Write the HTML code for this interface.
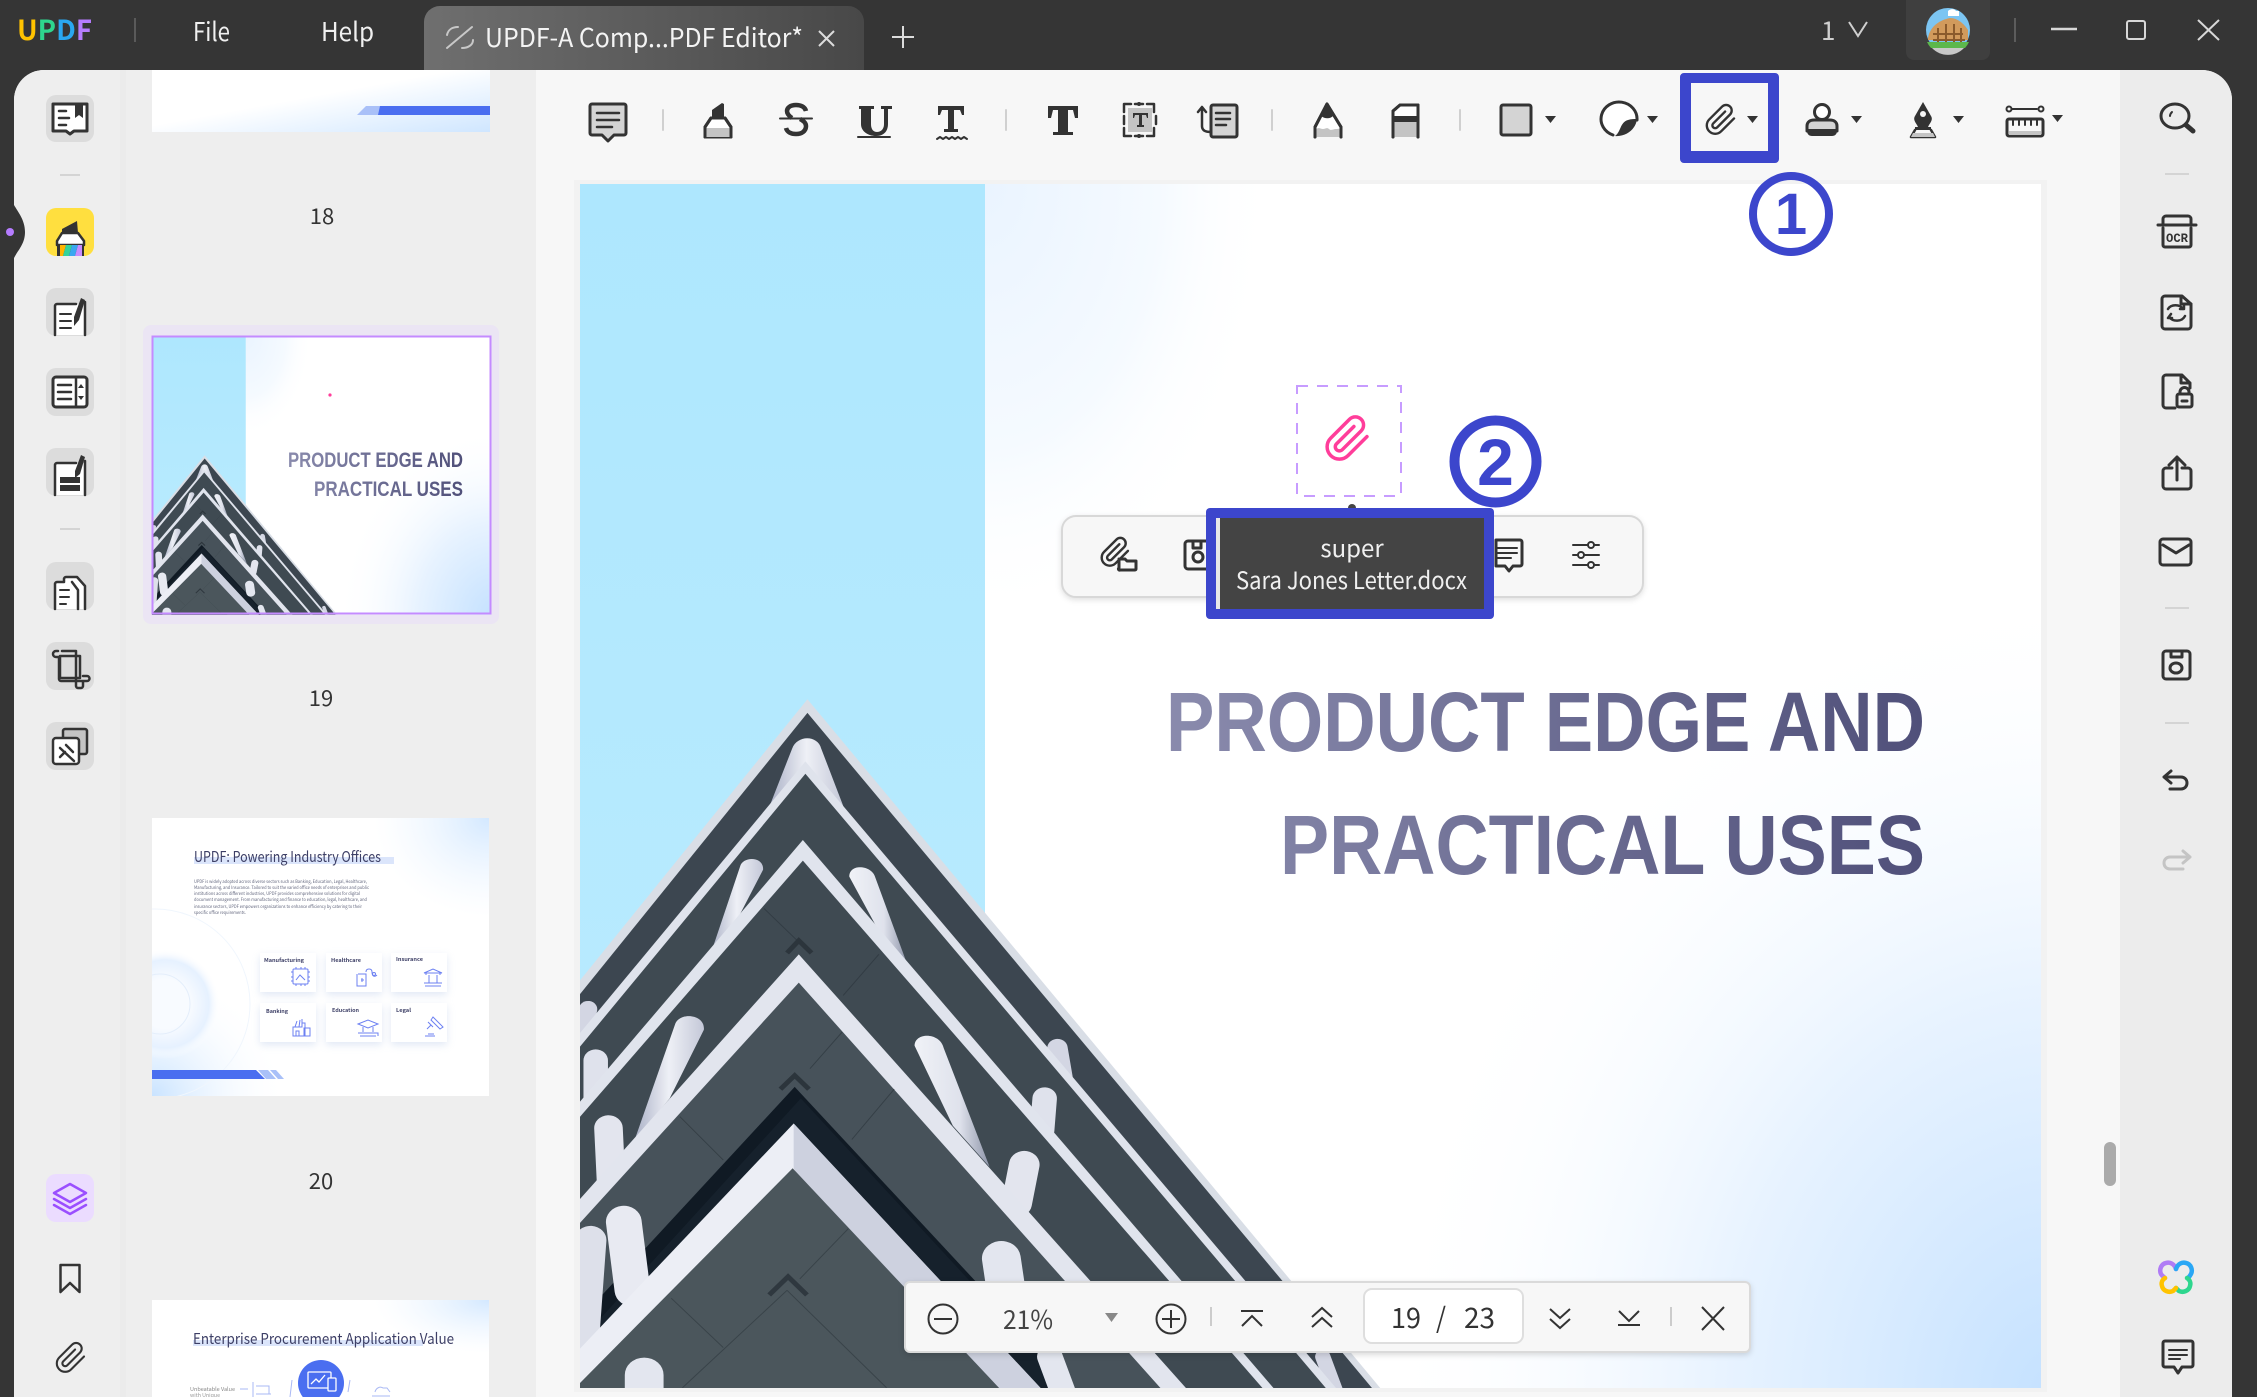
<!DOCTYPE html>
<html><head><meta charset="utf-8"><title>UPDF</title>
<style>
html,body{margin:0;padding:0;background:#353535;width:2257px;height:1397px;overflow:hidden}
svg{display:block}
text{font-family:"Noto Sans CJK SC","Liberation Sans",sans-serif}
.i{fill:none;stroke:#333;stroke-width:3;stroke-linejoin:round;stroke-linecap:round}
.w{fill:#fff}.g{fill:#d8d8d8}.k{fill:#333;stroke:none}.gg{fill:#c4c4c4;stroke:none}
.t{fill:#dcdcdc}
.s{fill:#d4d4d4}
.d{font-family:"Liberation Sans",sans-serif;font-weight:700}
</style></head><body>
<svg width="2257" height="1397" viewBox="0 0 2257 1397" xmlns="http://www.w3.org/2000/svg">
<defs>
<linearGradient id="tab" x1="0" x2="1" y1="0" y2="0"><stop offset="0" stop-color="#6f6f6f"/><stop offset="1" stop-color="#484848"/></linearGradient>
<linearGradient id="band" x1="0" x2="0" y1="0" y2="1"><stop offset="0" stop-color="#aee7fe"/><stop offset="1" stop-color="#bcecff"/></linearGradient>
<linearGradient id="col" x1="0" x2="1" y1="0" y2="0"><stop offset="0" stop-color="#aab0c6"/><stop offset=".5" stop-color="#eef0f6"/><stop offset="1" stop-color="#c4c8d8"/></linearGradient>
<linearGradient id="col2" x1="0" x2="1" y1="0" y2="0"><stop offset="0" stop-color="#f0f2f7"/><stop offset=".6" stop-color="#dfe2ec"/><stop offset="1" stop-color="#8f96aa"/></linearGradient>
<linearGradient id="tx1" gradientUnits="userSpaceOnUse" x1="1166" x2="1925" y1="0" y2="0"><stop offset="0" stop-color="#8a8bad"/><stop offset="1" stop-color="#50507a"/></linearGradient>
<linearGradient id="tx2" gradientUnits="userSpaceOnUse" x1="288" x2="463" y1="0" y2="0"><stop offset="0" stop-color="#8a8bad"/><stop offset="1" stop-color="#50507a"/></linearGradient>
<radialGradient id="pgBR" gradientUnits="userSpaceOnUse" cx="2060" cy="1400" r="1" gradientTransform="translate(2060 1400) scale(680 820) translate(-2060 -1400)"><stop offset="0" stop-color="#c4e1ff"/><stop offset=".5" stop-color="#e8f3ff"/><stop offset="1" stop-color="#fff" stop-opacity="0"/></radialGradient>
<radialGradient id="pgTL" gradientUnits="userSpaceOnUse" cx="985" cy="184" r="1" gradientTransform="translate(985 184) scale(290 440) translate(-985 -184)"><stop offset="0" stop-color="#eaf4ff"/><stop offset=".6" stop-color="#f5faff"/><stop offset="1" stop-color="#fff" stop-opacity="0"/></radialGradient>
<clipPath id="app"><path d="M14 1397V100a30 30 0 0 1 30-30H2202a30 30 0 0 1 30 30V1397Z"/></clipPath>
<clipPath id="pg"><rect x="580" y="184" width="1461" height="1204"/></clipPath>
<clipPath id="t20"><rect x="152" y="818" width="337" height="278"/></clipPath>
<clipPath id="t21"><rect x="152" y="1300" width="337" height="97"/></clipPath>
<radialGradient id="t20a" cx="1" cy="0" r="1"><stop offset="0" stop-color="#d3e8ff"/><stop offset=".55" stop-color="#fff" stop-opacity=".4"/><stop offset="1" stop-color="#fff" stop-opacity="0"/></radialGradient>
<radialGradient id="t20b" cx="0" cy="1" r=".75"><stop offset="0" stop-color="#c9e3ff"/><stop offset="1" stop-color="#fff" stop-opacity="0"/></radialGradient>
<radialGradient id="t20c" cx=".5" cy=".5" r=".5"><stop offset="0" stop-color="#f8fbff"/><stop offset=".45" stop-color="#f8fbff"/><stop offset=".8" stop-color="#e6f1ff"/><stop offset="1" stop-color="#fff" stop-opacity="0"/></radialGradient>
<linearGradient id="t18" x1="0" x2="1" y1="0" y2="1"><stop offset=".45" stop-color="#fff"/><stop offset="1" stop-color="#cfe6ff"/></linearGradient>
<g id="slide">
 <rect x="580" y="184" width="1461" height="1204" fill="#fff"/>
 <rect x="985" y="184" width="1056" height="1204" fill="url(#pgTL)"/>
 <rect x="1300" y="580" width="741" height="808" fill="url(#pgBR)"/>
 <rect x="580" y="184" width="405" height="1204" fill="url(#band)"/>
 <g clip-path="url(#pg)"><g transform="translate(560 680) scale(.5102 .4572)">
  <polygon points="485,42 37,660 37,1600 1646,1600" fill="#d9dee6"/>
  <polygon points="485,72 37,690 37,1600 1630,1600" fill="#3c4650"/>
  <g stroke-linecap="round" fill="none" stroke="#d3d6e3"><path d="M55 720L42 800" stroke-width="36"/><path d="M975 805L985 870" stroke-width="40"/><path d="M1495 1480L1525 1570" stroke-width="30"/></g>
  <path d="M455 150C465 120 505 120 512 150L556 278H410Z" fill="url(#col)"/>
  <polygon points="481,178 37,775 37,1600 1560,1600" fill="#dfe3ec"/>
  <polygon points="481,205 37,805 37,1600 1540,1600" fill="#3f4a52"/>
  <path d="M353 408C358 385 400 385 398 415L340 540L295 600Z" fill="url(#col)"/>
  <path d="M567 430C567 400 612 405 618 432L680 620L630 560Z" fill="url(#col2)"/>
  <g stroke-linecap="round" fill="none"><path d="M70 832V915" stroke="#dfe2ec" stroke-width="48"/><path d="M950 915L945 985" stroke="#dfe2ec" stroke-width="48"/></g>
  <polygon points="476,350 37,925 37,1600 1438,1600" fill="#e0e4ed"/>
  <polygon points="476,395 37,958 37,1600 1417,1600" fill="#3f4a52"/>
  <path d="M225 755C232 725 285 730 282 765L215 915L145 1010Z" fill="url(#col)"/>
  <path d="M695 800C695 770 745 770 752 805L842 1065L770 975Z" fill="url(#col2)"/>
  <g stroke-linecap="round" fill="none"><path d="M95 980L100 1095" stroke="#e3e5ee" stroke-width="56"/><path d="M910 1060L895 1145" stroke="#e3e5ee" stroke-width="60"/></g>
  <path d="M400 500L465 570M625 600L555 690" stroke="#323c44" stroke-width="2" fill="none"/>
  <path d="M445 597L468 570L493 597" stroke="#2c353c" stroke-width="10" fill="none"/>
  <polygon points="468,600 37,1138 37,1600 1268,1600" fill="#e2e5ee"/>
  <polygon points="468,662 37,1190 37,1600 1218,1600" fill="#47525a"/>
  <path d="M553 770L490 850M655 895L572 1005M235 955L320 1050" stroke="#353f46" stroke-width="2" fill="none"/>
  <path d="M432 895L460 865L488 895" stroke="#2c353c" stroke-width="10" fill="none"/>
  <polygon points="460,890 37,1400 37,1600 1052,1600" fill="#101a24"/>
  <polygon points="472,915 60,1420 60,1600 1040,1600" fill="#1a2632" opacity=".6"/>
  <g stroke-linecap="round" fill="none"><path d="M60 1225L45 1455" stroke="#dde0ea" stroke-width="62"/><path d="M125 1185L142 1335" stroke="#e8eaf2" stroke-width="70"/><path d="M865 1265L875 1340" stroke="#e3e6ef" stroke-width="76"/><path d="M960 1480L1000 1600" stroke="#e3e6ef" stroke-width="50"/></g>
  <polygon points="458,970 37,1465 37,1600 985,1600 " fill="#eceef5"/>
  <polygon points="458,970 985,1600 700,1600 458,1068" fill="#cdd1df"/>
  <polygon points="456,1068 37,1540 37,1600 904,1600" fill="#4b565c"/>
  <path d="M565 1200L470 1310M218 1352L320 1460M445 1335L640 1548M445 1335L240 1548" stroke="#394349" stroke-width="2" fill="none"/>
  <path d="M410 1345L447 1305L484 1345" stroke="#2f383f" stroke-width="10" fill="none"/>
  <path d="M165 1520V1600" stroke="#e3e6ef" stroke-width="76" stroke-linecap="round"/>
 </g></g>
</g>
<path id="clip" d="M21.44 11.05l-9.19 9.19a6 6 0 0 1-8.49-8.49l9.19-9.19a4 4 0 0 1 5.66 5.66l-9.2 9.19a2 2 0 0 1-2.83-2.83l8.49-8.48"/>
</defs>

<rect width="2257" height="1397" fill="#353535"/>

<!-- title bar -->
<rect x="424" y="6" width="440" height="80" rx="16" fill="url(#tab)"/>
<text x="17" y="40" font-size="28" font-weight="700" textLength="75" lengthAdjust="spacingAndGlyphs"><tspan fill="#ffc300">U</tspan><tspan fill="#2ed68e">P</tspan><tspan fill="#2aa7f0">D</tspan><tspan fill="#b67cff">F</tspan></text>
<path d="M135 18V42" stroke="#666" stroke-width="1.5"/>
<text x="193" y="41" font-size="26" fill="#f0f0f0" textLength="37" lengthAdjust="spacingAndGlyphs">File</text>
<text x="321" y="41" font-size="26" fill="#f0f0f0" textLength="53" lengthAdjust="spacingAndGlyphs">Help</text>
<g fill="none" stroke="#c8c8c8" stroke-width="2" stroke-linecap="round"><path d="M447 48L472 27"/><path d="M458 27c-6 0-10 3-11 8M462 48c6 0 11-3 11-8"/></g>
<text x="485" y="47" font-size="26" fill="#f4f4f4" textLength="318" lengthAdjust="spacingAndGlyphs">UPDF-A Comp...PDF Editor*</text>
<path d="M819 31L834 46M834 31L819 46M903 26V48M892 37H914" stroke="#dcdcdc" stroke-width="2" fill="none"/>
<text x="1821" y="40" font-size="26" fill="#cfcfcf">1</text>
<path d="M1849 22l9 14 9-14" fill="none" stroke="#cfcfcf" stroke-width="2"/>
<rect x="1906" y="-8" width="84" height="68" rx="8" fill="#3f3f3f"/>
<circle cx="1948" cy="30" r="22" fill="#7cc5f2"/>
<path d="M1928 38c2-12 12-18 22-20 8 0 14 6 18 12v10h-40z" fill="#d19a5c"/>
<path d="M1933 34h30M1933 40h32M1938 28v14M1946 24v18M1954 24v18M1961 28v14" stroke="#8a5a2c" stroke-width="2" fill="none"/>
<path d="M1927 42h42a22 22 0 0 1-4 6h-34a22 22 0 0 1-4-6z" fill="#5cb84c"/>
<path d="M1932 48h32a22 22 0 0 1-32 0z" fill="#c9c9c9"/>
<path d="M1948 11c3-3 7-2 8 0h3v5h-11z" fill="#fff"/>
<path d="M2015 18V42" stroke="#6a6a6a" stroke-width="1.5"/>
<path d="M2051 29H2077" stroke="#d8d8d8" stroke-width="2.5"/>
<rect x="2127" y="21" width="18" height="18" rx="2" fill="none" stroke="#d8d8d8" stroke-width="2"/>
<path d="M2198 20L2219 40M2219 20L2198 40" stroke="#d8d8d8" stroke-width="2"/>

<!-- app -->
<g clip-path="url(#app)">
 <rect x="14" y="70" width="2218" height="1327" fill="#f7f7f7"/>
 <rect x="14" y="70" width="522" height="1327" fill="#eeeeee"/>
 <rect x="120" y="70" width="6" height="1327" fill="#ebebeb"/>
 <rect x="2120" y="70" width="112" height="1327" fill="#ececec"/>
</g>
<!-- notch -->
<path d="M14 205C18 212 25 220 25 232C25 244 18 250 14 258Z" fill="#353535"/>
<circle cx="10" cy="232" r="4" fill="#b57cff"/>

<!-- thumbnails -->
<rect x="152" y="70" width="338" height="62" fill="url(#t18)"/>
<path d="M366 106H490V115H357Z" fill="#a9c0f8"/><path d="M380 106H490V115H378Z" fill="#4a6ef0"/>
<text x="322" y="224" font-size="22" fill="#333" text-anchor="middle">18</text>

<rect x="143" y="325" width="356" height="299" rx="8" fill="#ebe5f4"/>
<use href="#slide" transform="translate(152 336) scale(.2315 .2315) translate(-580 -184)"/>
<rect x="152.500" y="336.500" width="338" height="277" fill="none" stroke="#c48bff" stroke-width="2"/>
<circle cx="330" cy="395" r="1.6" fill="#ff3d9a"/>
<text class="d" x="288" y="467" font-size="21" fill="url(#tx2)" textLength="175" lengthAdjust="spacingAndGlyphs">PRODUCT EDGE AND</text>
<text class="d" x="314" y="496" font-size="21" fill="url(#tx2)" textLength="149" lengthAdjust="spacingAndGlyphs">PRACTICAL USES</text>
<text x="321" y="706" font-size="22" fill="#333" text-anchor="middle">19</text>

<!-- thumb 20 -->
<g clip-path="url(#t20)">
 <rect x="152" y="818" width="337" height="278" fill="#fff"/>
 <rect x="280" y="818" width="209" height="180" fill="url(#t20a)"/>
 <rect x="152" y="930" width="180" height="166" fill="url(#t20b)"/>
 <circle cx="165" cy="1004" r="55" fill="url(#t20c)"/>
 <g fill="none" stroke="#e4eefb"><circle cx="160" cy="1004" r="30"/><circle cx="155" cy="1004" r="95" stroke="#f0f6fd"/></g>
 <rect x="194" y="857" width="200" height="7" fill="#dbe5fb"/>
 <text x="194" y="862" font-size="15" fill="#3d3f66" textLength="187" lengthAdjust="spacingAndGlyphs">UPDF: Powering Industry Offices</text>
 <g font-size="4.600" fill="#666a80">
  <text x="194" y="883" textLength="173" lengthAdjust="spacingAndGlyphs">UPDF is widely adopted across diverse sectors such as Banking, Education, Legal, Healthcare,</text>
  <text x="194" y="889" textLength="175" lengthAdjust="spacingAndGlyphs">Manufacturing, and Insurance. Tailored to suit the varied office needs of enterprises and public</text>
  <text x="194" y="895" textLength="166" lengthAdjust="spacingAndGlyphs">institutions across different industries, UPDF provides comprehensive solutions for digital</text>
  <text x="194" y="901" textLength="173" lengthAdjust="spacingAndGlyphs">document management. From manufacturing and finance to education, legal, healthcare, and</text>
  <text x="194" y="908" textLength="168" lengthAdjust="spacingAndGlyphs">insurance sectors, UPDF empowers organizations to enhance efficiency by catering to their</text>
  <text x="194" y="914" textLength="52" lengthAdjust="spacingAndGlyphs">specific office requirements.</text>
 </g>
 <g fill="#fff" style="filter:drop-shadow(0 3px 4px rgba(120,150,210,.22))">
  <rect x="260" y="953" width="56" height="39"/><rect x="326" y="953" width="56" height="39"/><rect x="391" y="953" width="56" height="39"/>
  <rect x="260" y="1003" width="56" height="39"/><rect x="326" y="1003" width="56" height="39"/><rect x="391" y="1003" width="56" height="39"/>
 </g>
 <g font-size="5.200" font-weight="700" fill="#3d3f66">
  <text x="264" y="962" textLength="40" lengthAdjust="spacingAndGlyphs">Manufacturing</text><text x="331" y="962" textLength="30" lengthAdjust="spacingAndGlyphs">Healthcare</text><text x="396" y="961" textLength="27" lengthAdjust="spacingAndGlyphs">Insurance</text>
  <text x="266" y="1013" textLength="22" lengthAdjust="spacingAndGlyphs">Banking</text><text x="332" y="1012" textLength="27" lengthAdjust="spacingAndGlyphs">Education</text><text x="396" y="1012" textLength="15" lengthAdjust="spacingAndGlyphs">Legal</text>
 </g>
 <g fill="none" stroke="#6c80f2" stroke-width="1">
  <rect x="293" y="969" width="15" height="15" rx="1"/><path d="M291 972h2M291 977h2M291 981h2M308 972h2M308 977h2M308 981h2M296 967v2M301 967v2M305 967v2M296 984v2M301 984v2M305 984v2M296 980l4-5 5 5"/>
  <path d="M358 974h8v12h-9v-12M361 980h3M362 978v4M366 972c0-3 2-3 3-3s3 0 3 3c0 5 3 5 5 3"/><circle cx="374" cy="974" r="1.500"/>
  <path d="M424 973l9-4 9 4zM426 973v2M440 973v2M425 986h16M424 983h18M429 975v8M437 975v8"/>
  <path d="M293 1036v-9h9v-4h3v13zM304 1036v-8h6v8zM296 1036v-5h3v5zM295 1027l2-6M299 1027l1-7M302 1023v-4"/>
  <path d="M360 1036h16M358 1033h20v3M363 1027v5M373 1027v5M358 1024l10-4 10 4-10 4z"/>
  <path d="M425 1036h10M428 1034h6M433 1017l10 10-3 2-9-9zM433 1027l-5-5M427 1029l4-4"/>
 </g>
 <path d="M152 1070H256L265 1079H152Z" fill="#4a6ef0"/>
 <path d="M258 1070H268L276 1079H266ZM270 1070H276L284 1079H278Z" fill="#a9c0f8"/>
</g>
<text x="321" y="1189" font-size="22" fill="#333" text-anchor="middle">20</text>

<!-- thumb 21 -->
<g clip-path="url(#t21)">
 <rect x="152" y="1300" width="337" height="97" fill="#fff"/>
 <rect x="280" y="1300" width="209" height="97" fill="url(#t20a)"/>
 <rect x="193" y="1340" width="230" height="6" fill="#dbe5fb"/>
 <text x="193" y="1344" font-size="15" fill="#3d3f66" textLength="261" lengthAdjust="spacingAndGlyphs">Enterprise Procurement Application Value</text>
 <circle cx="321" cy="1383" r="23" fill="#4a6ef0"/>
 <g fill="none" stroke="#fff" stroke-width="1.300"><rect x="308" y="1372" width="23" height="16" rx="1"/><path d="M311 1384l5-5 3 3 6-7"/><rect x="328" y="1378" width="8" height="13" rx="1" fill="#4a6ef0"/></g>
 <text x="190" y="1391" font-size="5.500" fill="#888" textLength="45" lengthAdjust="spacingAndGlyphs">Unbeatable Value</text>
 <text x="190" y="1397" font-size="5.500" fill="#999" textLength="30" lengthAdjust="spacingAndGlyphs">with Unique</text>
 <g fill="none" stroke="#a9b8f4" stroke-width="1"><path d="M240 1389h8M253 1382v15M256 1386h13v8M256 1394h15"/><path d="M375 1392c1-4 5-6 8-4h4l3 4M372 1396h18M292 1380l-2 17M350 1380l-2 12"/></g>
</g>

<!-- main page -->
<rect x="574" y="180" width="1473" height="1212" fill="#000" opacity=".02"/>
<use href="#slide"/>
<text class="d" x="1166" y="751" font-size="84" fill="url(#tx1)" textLength="759" lengthAdjust="spacingAndGlyphs">PRODUCT EDGE AND</text>
<text class="d" x="1280" y="874" font-size="84" fill="url(#tx1)" textLength="645" lengthAdjust="spacingAndGlyphs">PRACTICAL USES</text>

<!-- top toolbar -->
<g class="i">
 <path class="s" d="M590 106a2 2 0 0 1 2-2h32a2 2 0 0 1 2 2v27a2 2 0 0 1-2 2h-10l-6 6-6-6h-10a2 2 0 0 1-2-2z"/>
 <path d="M597 113h22M597 120h22M597 127h15" stroke-width="2.500"/>
 <path d="M663 110V130" stroke="#d0d0d0" stroke-width="2"/>
 <!-- highlighter -->
 <path class="k" d="M712 118V110L722 103L724 104V118Z"/>
 <path class="w" d="M711 118H725L731 127V137H705V127Z"/>
 <rect class="gg" x="706" y="128" width="24" height="9"/>
 <path d="M705 137V127L711 118H725L731 127V137"/>
 <!-- strike -->
 <path d="M806 111c-1-4-5-6-10-6-6 0-9 3-9 6 0 3 2 5 5 7M800 119c4 2 6 4 6 7 0 5-4 8-10 8-5 0-9-2-10-6" stroke-width="4.500" stroke-linecap="butt"/>
 <path d="M780 118.500H812" stroke-width="2"/>
 <!-- underline -->
 <path class="k" d="M859 106h15v3h-3v15c0 6 3 8 6 8s7-2 7-8v-15h-3v-3h11v3h-4v15c0 8-5 12-12 12s-15-4-15-12v-15h-2z"/>
 <path d="M858 137H890" stroke-width="2"/>
 <!-- squiggly T -->
 <path class="k" d="M938 106H964V115H962L960 110H954V129H958V132H944V129H948V110H942L940 115H938Z"/>
 <path d="M937 139l3-2 3 2 3-2 3 2 3-2 3 2 3-2 3 2 3-2 3 2" stroke-width="2"/>
 <path d="M1006 110V130" stroke="#d0d0d0" stroke-width="2"/>
 <!-- T -->
 <path class="k" d="M1048 106H1078V118H1075L1073 110H1068V132H1073V135H1053V132H1058V110H1053L1051 118H1048Z"/>
 <!-- text box -->
 <rect class="gg" x="1128" y="108" width="24" height="24"/>
 <path class="k" d="M1133 113H1148V118H1147L1146 115H1142V125H1144V127H1137V125H1139V115H1135L1134 118H1133Z"/>
 <path d="M1131 104h-7v8M1147 104h7v8M1131 136h-7v-8M1147 136h7v-8M1124 116v8M1156 116v8M1135 104h8M1135 136h8" stroke-width="2.500"/>
 <circle cx="1139" cy="104" r="2" fill="#333" stroke="none"/><circle cx="1139" cy="136" r="2" fill="#333" stroke="none"/>
 <!-- callout -->
 <rect class="s" x="1211" y="105" width="26" height="32" rx="2"/>
 <path d="M1216 113h14M1216 119h14M1216 125h10" stroke-width="2.500"/>
 <path d="M1198 112l4-5 4 5M1202 108v18c0 5 4 6 9 6" stroke-width="2.500"/>
 <path d="M1272 110V130" stroke="#d0d0d0" stroke-width="2"/>
 <!-- pencil -->
 <path class="w" d="M1315 137V127L1327 104L1341 127V137"/>
 <path class="gg" d="M1316 129c3-2 5 0 7 0s4-2 6 0 4 0 7 0 4-1 4 1v7h-24Z"/>
 <path class="k" d="M1327 103L1333 116C1330 119 1325 119 1321 116Z"/>
 <path d="M1315 137V127L1327 104L1341 127V137" />
 <!-- eraser -->
 <path class="w" d="M1393 137V111L1400 105H1418V137"/>
 <rect class="gg" x="1394" y="122" width="24" height="15"/>
 <rect class="k" x="1393" y="116" width="26" height="6"/>
 <path d="M1393 137V111L1400 105H1418V137"/>
 <path d="M1460 110V130" stroke="#d0d0d0" stroke-width="2"/>
 <!-- rect -->
 <rect class="s" x="1501" y="105" width="30" height="30" rx="2"/>
 <!-- sticker -->
 <path class="w" d="M1637 120A18 17 0 1 0 1613 135"/>
 <path class="k" d="M1637 119C1636 129 1626 137 1615 136C1621 132 1620 122 1628 120C1631 119 1634 119 1637 119Z"/>
 <!-- clip -->
 <g transform="translate(1704 103) scale(1.400)" stroke-width="1.700"><use href="#clip"/></g>
 <!-- stamp -->
 <circle cx="1822" cy="112" r="7.500" class="w"/>
 <path class="s" d="M1807 131v-5c0-4 3-6 7-6h16c4 0 7 2 7 6v5z"/>
 <path class="k" d="M1807 129H1837V131C1837 134 1835 136 1832 136H1812C1809 136 1807 134 1807 131Z"/>
 <path class="k" d="M1819 118h6v3h-6z"/>
 <!-- pen -->
 <path class="k" d="M1923 102L1931 116C1933 119 1931 122 1929 125L1928 127H1918L1917 125C1915 122 1913 119 1915 116Z"/>
 <circle cx="1923" cy="114" r="3" fill="#f7f7f7" stroke="none"/>
 <path class="k" d="M1915 127h16v3h-16z"/>
 <path d="M1915 130L1911 137H1935L1931 130" stroke-width="2.500"/>
 <path class="gg" d="M1913 133h20l2 4h-24z"/>
 <!-- ruler -->
 <path d="M2011 109H2037" stroke-width="2"/><circle cx="2009" cy="109" r="2.500" fill="#f7f7f7" stroke-width="2"/><circle cx="2041" cy="109" r="2.500" fill="#f7f7f7" stroke-width="2"/>
 <rect x="2007" y="119" width="36" height="17" rx="2"/>
 <rect class="gg" x="2009" y="131" width="32" height="4"/>
 <path d="M2013 119v6M2019 119v6M2025 119v6M2031 119v6M2037 119v6" stroke-width="2"/>
</g>
<g fill="#333">
 <path d="M1545 116h11l-5.500 7z"/><path d="M1647 116h11l-5.500 7z"/><path d="M1747 116h11l-5.500 7z"/>
 <path d="M1851 116h11l-5.500 7z"/><path d="M1953 116h11l-5.500 7z"/><path d="M2052 115h11l-5.500 7z"/>
</g>

<!-- blue annotation 1 -->
<path fill-rule="evenodd" d="M1684 73H1775a4 4 0 0 1 4 4V159a4 4 0 0 1-4 4H1684a4 4 0 0 1-4-4V77a4 4 0 0 1 4-4ZM1691 83V151H1768V83Z" fill="#3c46cc"/>
<circle cx="1791" cy="214" r="38" fill="none" stroke="#3c46cc" stroke-width="8"/>
<text x="1791" y="234" font-size="58" font-weight="700" fill="#3c46cc" text-anchor="middle" style="font-family:'Liberation Sans',sans-serif">1</text>

<!-- attachment annotation -->
<rect x="1297" y="386" width="104" height="110" fill="none" stroke="#c79cff" stroke-width="2" stroke-dasharray="11 9"/>
<g transform="translate(1323 414) scale(2.050)" fill="none" stroke="#ff3d9a" stroke-width="1.700" stroke-linecap="round" stroke-linejoin="round"><use href="#clip"/></g>
<circle cx="1352" cy="508" r="4" fill="#444"/>

<!-- popup -->
<rect x="1062" y="516" width="581" height="81" rx="14" fill="#f7f7f7" stroke="#d8d8d8" stroke-width="2" style="filter:drop-shadow(0 2px 3px rgba(0,0,0,.12))"/>
<g class="i" stroke-width="2.500">
 <g transform="translate(1099 536) scale(1.350)" stroke-width="1.800"><use href="#clip"/></g>
 <path fill="#f7f7f7" d="M1119 568v-9h6l2 2h9v8a1 1 0 0 1-1 1h-15a1 1 0 0 1-1-2z"/>
 <rect x="1185" y="541" width="24" height="28" rx="3"/>
 <path d="M1193 541v7h8v-7"/><circle cx="1198" cy="557" r="5"/>
 <path d="M1496 540h24a2 2 0 0 1 2 2v22a2 2 0 0 1-2 2h-7l-4 5-4-5h-9z"/>
 <path d="M1497 548h20M1497 553h20M1497 558h14" stroke-width="2"/>
 <path d="M1573 545h26M1573 555h26M1573 565h26" stroke-width="2"/>
 <circle cx="1591" cy="545" r="3" fill="#f7f7f7" stroke-width="2"/><circle cx="1581" cy="555" r="3" fill="#f7f7f7" stroke-width="2"/><circle cx="1591" cy="565" r="3" fill="#f7f7f7" stroke-width="2"/>
</g>

<!-- tooltip -->
<rect x="1206" y="508" width="288" height="111" rx="4" fill="#3c46cc"/>
<rect x="1216" y="518" width="268" height="91" fill="#e8e8e8"/>
<rect x="1220" y="518" width="264" height="91" fill="#444"/>
<text x="1352" y="557" font-size="24" fill="#f0f0f0" text-anchor="middle">super</text>
<text x="1236" y="589" font-size="24" fill="#f0f0f0" textLength="231" lengthAdjust="spacingAndGlyphs">Sara Jones Letter.docx</text>

<!-- circle 2 -->
<circle cx="1495.500" cy="461.500" r="41" fill="none" stroke="#3c46cc" stroke-width="10"/>
<text x="1495.500" y="485" font-size="66" font-weight="700" fill="#3c46cc" text-anchor="middle" style="font-family:'Liberation Sans',sans-serif">2</text>

<!-- bottom bar -->
<rect x="905" y="1282" width="845" height="70" rx="5" fill="#f7f7f7" stroke="#dadada" stroke-width="2" style="filter:drop-shadow(0 2px 3px rgba(0,0,0,.14))"/>
<rect x="1364" y="1289" width="159" height="54" rx="8" fill="#fff" stroke="#dedede" stroke-width="2"/>
<g fill="none" stroke="#333" stroke-width="2">
 <circle cx="943" cy="1319" r="14.500"/><path d="M934 1319h18"/>
 <circle cx="1171" cy="1319" r="14.500"/><path d="M1162 1319h18M1171 1310v18"/>
 <path d="M1211 1307v19" stroke="#ccc"/><path d="M1671 1307v19" stroke="#ccc"/>
 <path d="M1241 1311h22M1242 1326l10-10 10 10"/>
 <path d="M1312 1317l10-9 10 9M1312 1327l10-9 10 9"/>
 <path d="M1550 1309l10 9 10-9M1550 1319l10 9 10-9"/>
 <path d="M1619 1311l10 10 10-10M1618 1325h22"/>
 <path d="M1702 1307l22 23M1724 1307l-22 23"/>
</g>
<path d="M1105 1313h13l-6.500 9z" fill="#888"/>
<text x="1028" y="1329" font-size="26" fill="#444" text-anchor="middle" textLength="50" lengthAdjust="spacingAndGlyphs">21%</text>
<g font-size="28" fill="#333">
 <text x="1391" y="1328" textLength="30" lengthAdjust="spacingAndGlyphs">19</text>
 <text x="1436" y="1328" textLength="10" lengthAdjust="spacingAndGlyphs">/</text>
 <text x="1464" y="1328" textLength="31" lengthAdjust="spacingAndGlyphs">23</text>
</g>

<!-- left rail -->
<g class="t">
 <rect x="46" y="95" width="48" height="47" rx="10"/>
 <rect x="46" y="288" width="48" height="48" rx="10"/><rect x="46" y="368" width="48" height="48" rx="10"/>
 <rect x="46" y="448" width="48" height="48" rx="10"/><rect x="46" y="562" width="48" height="48" rx="10"/>
 <rect x="46" y="642" width="48" height="48" rx="10"/><rect x="46" y="722" width="48" height="48" rx="10"/>
</g>
<rect x="46" y="208" width="48" height="48" rx="10" fill="#ffdf3f"/>
<rect x="46" y="1174" width="48" height="48" rx="10" fill="#ebdcff"/>
<path d="M60 175H80M60 529H80" stroke="#d4d4d4" stroke-width="2"/>
<path d="M2165 174H2189M2165 608H2189M2165 723H2189" stroke="#d4d4d4" stroke-width="2"/>
<g class="i">
 <!-- reader -->
 <path class="w" d="M53 104H87V131H74L70 134L66 131H53Z"/>
 <path d="M59 111h7M59 118h10M59 125h7" stroke-width="2.500"/>
 <path class="k" d="M75 103V118L79 115L83 118V103Z"/>
 <!-- highlight tile -->
 <path class="k" d="M77 221L62 229V233H78Z"/>
 <path class="w" d="M62 233H78L84 241V245H57V241Z" stroke-width="2.500"/>
 <rect x="57" y="245" width="27" height="11" fill="#333" stroke="none"/>
 <path d="M60 245h6l-3 11h-3z" fill="#ffb400" stroke="none"/><path d="M66 245h6l-3 11h-6z" fill="#34d399" stroke="none"/><path d="M72 245h6l-3 11h-6z" fill="#3aa7f0" stroke="none"/><path d="M78 245h4v11h-7z" fill="#c78cff" stroke="none"/>
 <!-- edit -->
 <path class="w" d="M55 335V306a2 2 0 0 1 2-2H85V335Z" stroke="none"/>
 <path d="M55 335V306a2 2 0 0 1 2-2H76M85 302V335" stroke-width="2.500"/>
 <path d="M60 314h11M60 321h11M60 328h11" stroke-width="2"/>
 <path class="k" d="M81 298L85 300L79 320L74 326L74 317Z"/>
 <!-- reader 2 -->
 <rect x="53" y="377" width="34" height="30" rx="3" class="w"/>
 <path d="M76 377v30M58 385h13M58 392h13M58 399h13" stroke-width="2.500"/>
 <path class="k" d="M78 388l3-4 3 4zM78 396l3 4 3-4z"/>
 <!-- redact -->
 <path class="w" d="M55 495V465a2 2 0 0 1 2-2H85V495Z" stroke="none"/>
 <path d="M55 495V465a2 2 0 0 1 2-2H76M85 461V495" stroke-width="2.500"/>
 <rect class="k" x="60" y="477" width="20" height="6"/><rect class="k" x="60" y="485" width="20" height="6"/>
 <path class="k" d="M81 455L85 457L80 474L75 478L75 471Z"/>
 <!-- organize -->
 <path class="w" d="M55 609V584a2 2 0 0 1 2-2H64V579a2 2 0 0 1 2-2H77L85 586V609Z" stroke="none"/>
 <path d="M55 609V584a2 2 0 0 1 2-2H64M64 582V579a2 2 0 0 1 2-2H77L85 586V609M72 582L78 590V609" stroke-width="2.500"/>
 <path d="M60 590h9M60 597h9M60 604h6" stroke-width="2"/>
 <!-- crop -->
 <rect x="60" y="656" width="20" height="22" stroke-width="2.500" fill="#dcdcdc"/>
 <path d="M62 651H76V686a2 2 0 0 0 2 2h3a2 2 0 0 0 2-2V682" stroke-width="2.500"/>
 <path d="M58 651h-2a3 3 0 0 0 0 6h3v22a2 2 0 0 0 2 2H87a2.500 2.500 0 0 0 0-5h-4" stroke-width="2.500"/>
 <!-- overlap -->
 <rect x="63" y="729" width="24" height="25" rx="2" fill="#c4c4c4" stroke-width="2.500"/>
 <rect x="53" y="738" width="26" height="26" rx="3" class="w" stroke-width="2.500"/>
 <path d="M60 757l5-5M60 748l14 13M66 745l7 7" stroke-width="2.500"/>
 <!-- bookmark -->
 <path d="M60.500 1265H79.500V1292L70 1283L60.500 1292Z" stroke-width="2.500"/>
 <!-- bottom clip -->
 <g transform="translate(54 1341) scale(1.400)" stroke-width="1.500"><use href="#clip"/></g>
</g>
<g fill="none" stroke="#9a4fff" stroke-width="2.500" stroke-linejoin="round" stroke-linecap="round">
 <path d="M70 1184L86 1193L70 1202L54 1193Z"/><path d="M54 1199L70 1208L86 1199"/><path d="M54 1205L70 1214L86 1205"/>
</g>

<!-- right rail -->
<g class="i" stroke-width="2.500">
 <ellipse cx="2175" cy="116" rx="14" ry="12"/><path d="M2186 125L2193 131" stroke-width="5"/><path d="M2170 116c0-2 1-3 2-4" stroke-width="2"/>
 <path d="M2163 224v-5a3 3 0 0 1 3-3h22a3 3 0 0 1 3 3v5M2158 225H2196M2163 228v17a2 2 0 0 0 2 2h24a2 2 0 0 0 2-2v-17"/>
 <path d="M2165 296h17l9 8v22a3 3 0 0 1-3 3h-23a3 3 0 0 1-3-3v-27a3 3 0 0 1 3-3z"/><path d="M2181 296v8h10"/>
 <path d="M2168 309c3-5 12-5 15 0M2185 316c-3 6-12 6-16 1M2180 309h4v-4M2171 314l-3 4h4" stroke-width="2.500"/>
 <path d="M2175 408h-9a3 3 0 0 1-3-3v-27a3 3 0 0 1 3-3h16l8 8v5M2181 375v8h9"/>
 <rect x="2177" y="394" width="15" height="13" rx="2"/><path d="M2180 394v-2a4.500 4.500 0 0 1 9 0v2M2182 401h5" />
 <path d="M2172 468h-6a3 3 0 0 0-3 3v15a3 3 0 0 0 3 3h22a3 3 0 0 0 3-3v-15a3 3 0 0 0-3-3h-6M2177 480V457M2169 465l8-8 8 8"/>
 <rect x="2160" y="539" width="31" height="26" rx="3"/><path d="M2163 545L2176 553L2189 545"/>
 <rect x="2163" y="651" width="27" height="28" rx="3"/><path d="M2171 651v6h11v-6"/><ellipse cx="2176" cy="668" rx="6" ry="5"/>
 <path d="M2171 771l-7 6 7 6M2164 777H2181c8 0 8 12 0 12H2170"/>
 <path d="M2183 851l7 6-7 6M2190 857H2170c-8 0-8 12 0 12H2183" stroke="#c4c4c4"/>
 <path d="M2163 1343a2 2 0 0 1 2-2h26a2 2 0 0 1 2 2v22a2 2 0 0 1-2 2h-9l-4 6-4-6h-9a2 2 0 0 1-2-2z" stroke-width="3"/>
 <path d="M2169 1350h18M2169 1355h18M2169 1359h11" stroke-width="2"/>
</g>
<text x="2166" y="242" font-size="13" font-weight="700" fill="#333" textLength="22" lengthAdjust="spacingAndGlyphs" style="font-family:'Liberation Mono',monospace">OCR</text>
<rect x="2104" y="1142" width="12" height="44" rx="6" fill="#aaaaaa"/>
<g fill="none" stroke-width="4.500" stroke-linecap="round">
 <path d="M2176 1269c-2-6-7-7-10-6-5 1-7 7-5 11 1 2 3 3 4 4" stroke="#b07cf5"/>
 <path d="M2176 1269c2-6 7-7 10-6 5 1 7 7 5 11-1 2-2 3-3 4" stroke="#2aa7f5"/>
 <path d="M2187 1278c3 2 4 5 3 8-1 5-7 7-11 5l-3-3" stroke="#2ed68e"/>
 <path d="M2165 1278c-3 2-4 5-3 8 1 5 7 7 11 5l3-3" stroke="#ffc300"/>
</g>
</svg>
</body></html>
